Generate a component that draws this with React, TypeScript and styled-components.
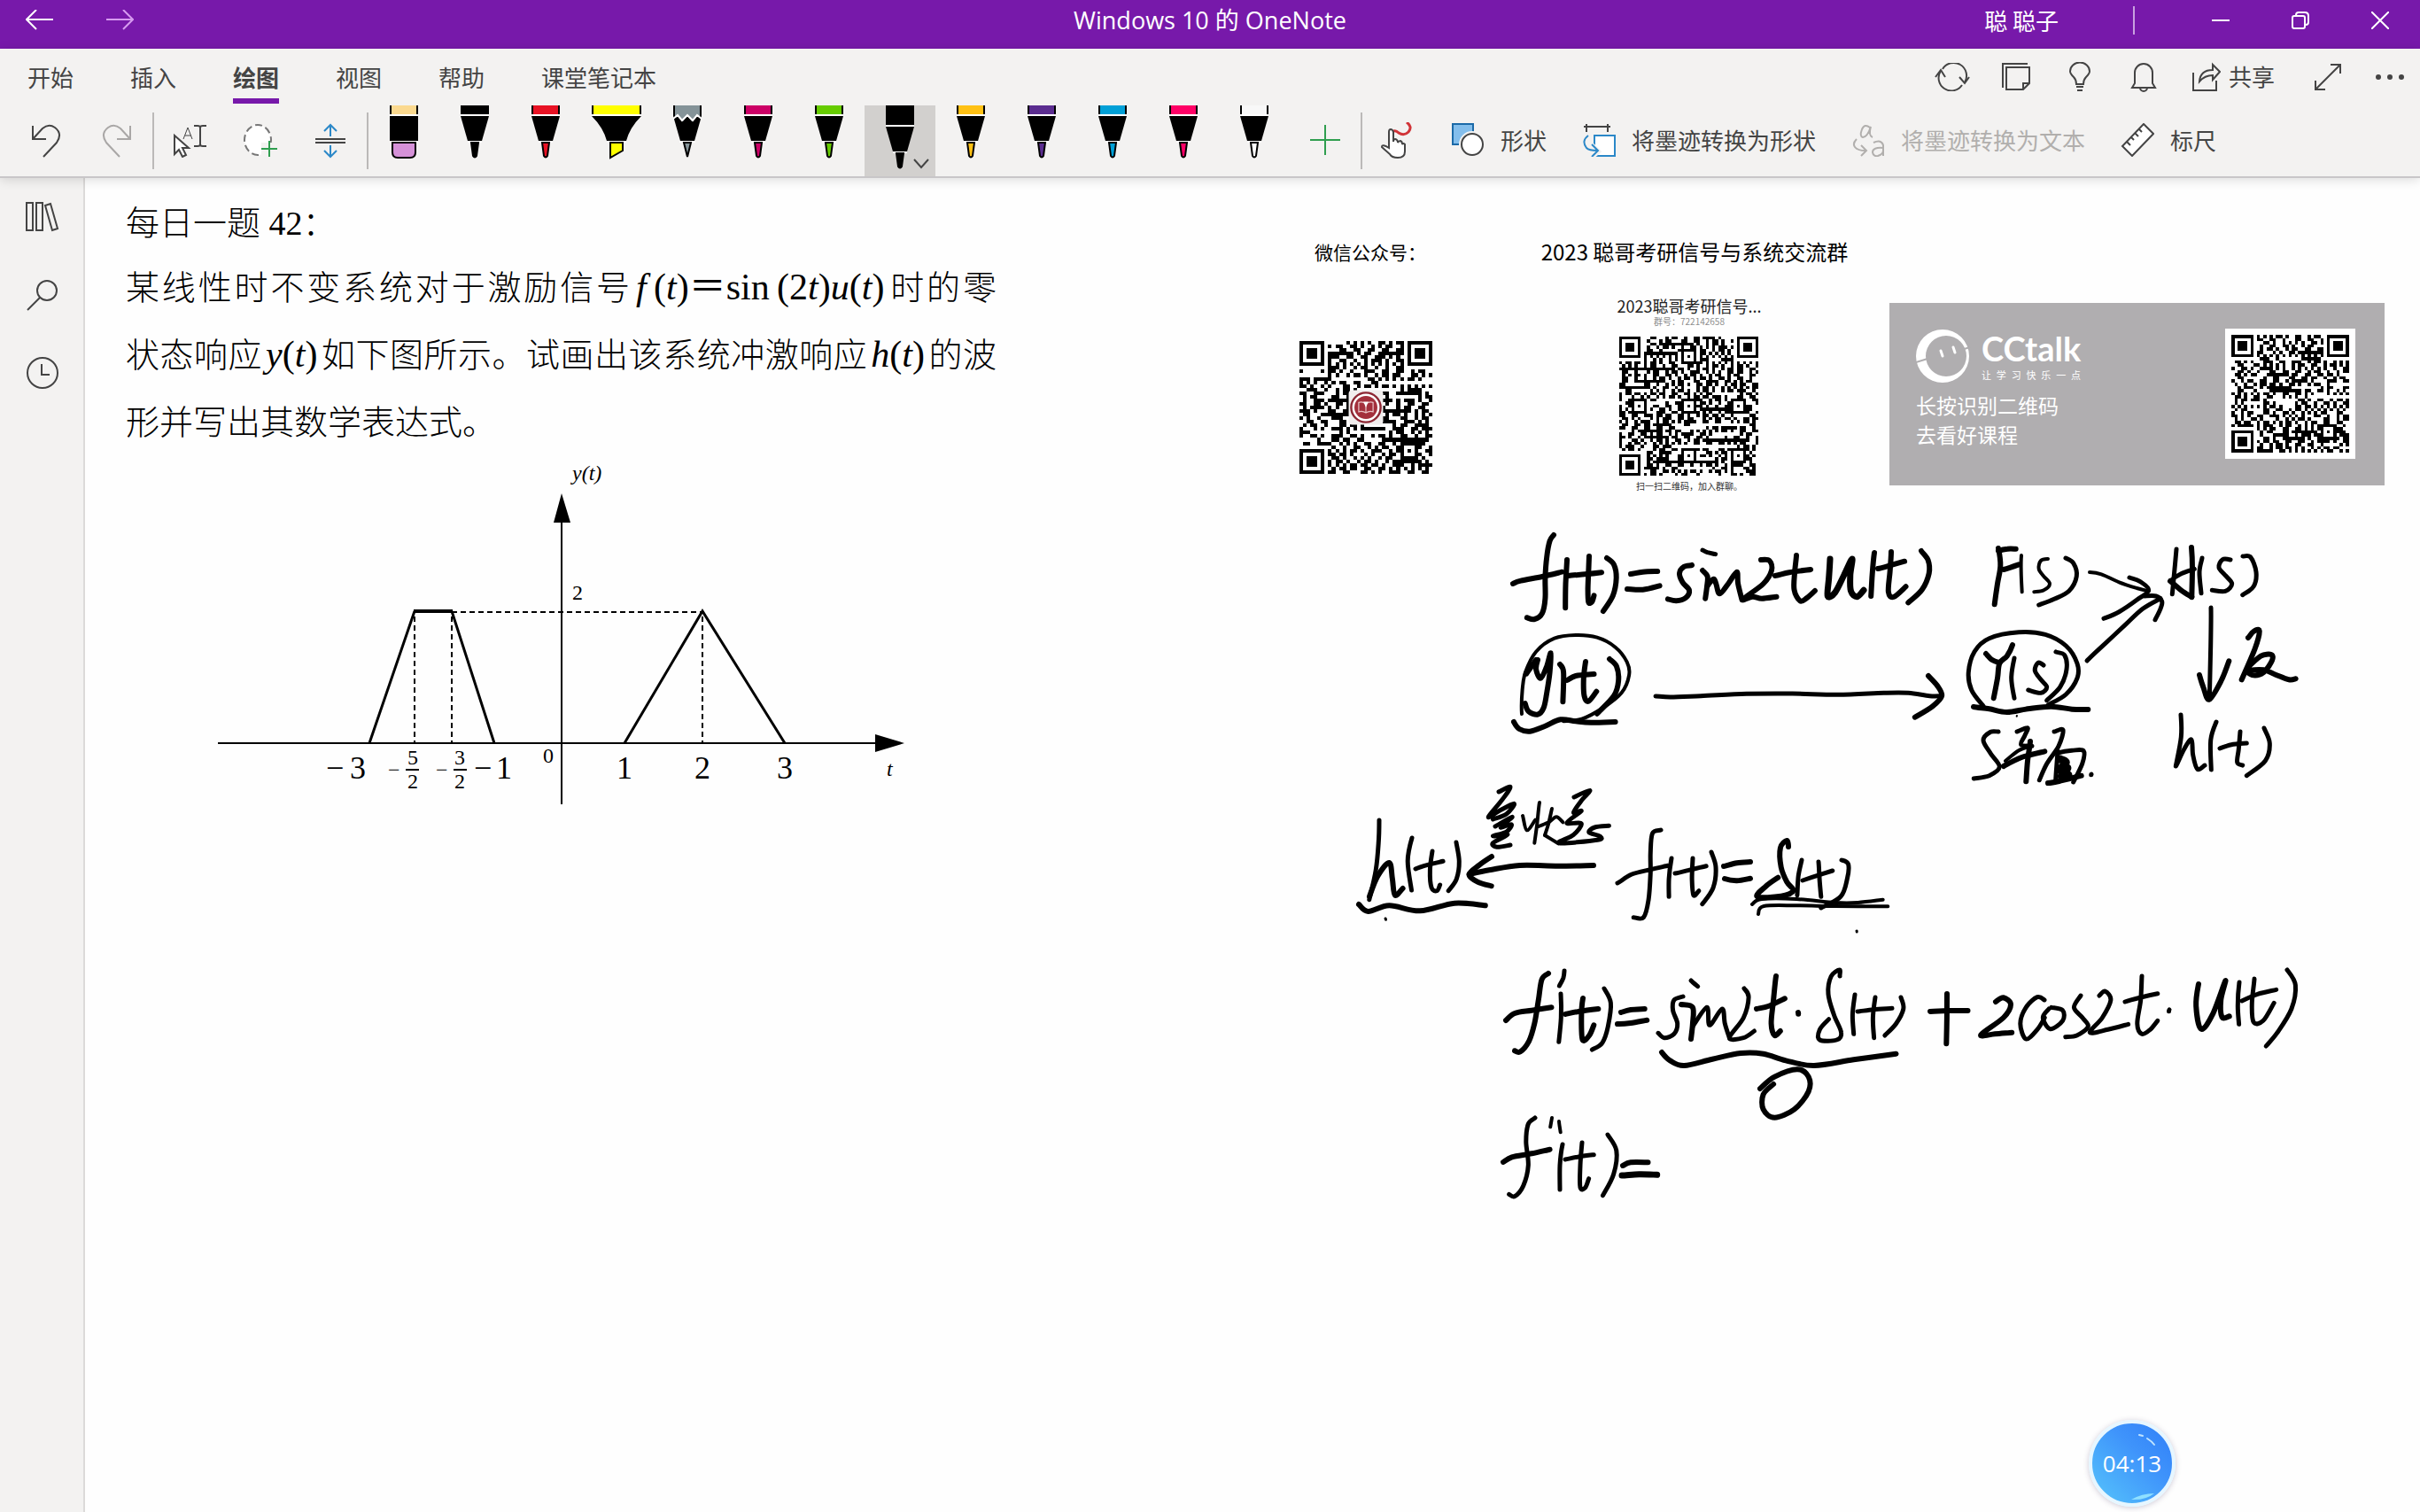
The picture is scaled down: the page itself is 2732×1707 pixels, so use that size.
import React from "react";
import styled, { createGlobalStyle } from "styled-components";

const ui = `"Noto Sans CJK SC", "Noto Sans", sans-serif`;
const serif = `"Liberation Serif", "Noto Sans CJK SC", serif`;
const ink = "#444444";

const GlobalStyle = createGlobalStyle`
  * { box-sizing: border-box; }
  html, body { margin: 0; padding: 0; }
  body { font-family: ${ui}; color: ${ink}; background: #ffffff; }
  button { font: inherit; color: inherit; background: none; border: 0; padding: 0; margin: 0; }
  svg { display: block; }
`;

const Shell = styled.div`
  min-height: 100vh;
  display: flex;
  flex-direction: column;
`;

/* ---------- title bar ---------- */

const TitleBar = styled.header`
  display: grid;
  grid-template-columns: 1fr auto 1fr;
  align-items: center;
  height: 55px;
  padding-bottom: 9px;
  background: #7719aa;
  color: #ffffff;
  font-size: 26px;
  line-height: 32px;
`;

const Title = styled.h1`
  margin: 0;
  font-family: "Open Sans", ${ui};
  font-size: 27px;
  font-weight: 400;
`;

const BarGroup = styled.div<{ $end?: boolean }>`
  display: flex;
  align-items: center;
  justify-content: ${(p) => (p.$end ? "flex-end" : "flex-start")};
`;

const BarButton = styled.button<{ $dim?: boolean }>`
  display: grid;
  place-items: center;
  width: 90px;
  height: 46px;
  color: ${(p) => (p.$dim ? "#d79bf0" : "#ffffff")};
`;

const Account = styled.button`
  color: #ffffff;
  padding: 0 84px 0 0;
`;

const BarDivider = styled.span`
  width: 2px;
  height: 32px;
  margin-right: 52px;
  background: #c9a0e0;
`;

/* ---------- ribbon ---------- */

const Ribbon = styled.div`
  position: relative;
  z-index: 1;
  background: #f3f2f1;
  border-bottom: 2px solid #c8c6c8;
  box-shadow: 0 2px 12px rgba(0, 0, 0, 0.14);
  font-size: 26px;
  line-height: 36px;
`;

const TabRow = styled.div`
  display: flex;
  justify-content: space-between;
  align-items: flex-start;
  height: 64px;
`;

const Tabs = styled.nav`
  display: flex;
  gap: 64px;
  padding-left: 31px;
`;

const Tab = styled.button<{ $active?: boolean }>`
  height: 62px;
  padding-top: 8px;
  border-bottom: 6px solid ${(p) => (p.$active ? "#7719aa" : "transparent")};
  font-weight: ${(p) => (p.$active ? 700 : 400)};
`;

const Actions = styled.div`
  display: flex;
`;

const ActionButton = styled.button`
  display: grid;
  place-items: center;
  width: 72px;
  height: 64px;
  &:last-child {
    width: 68px;
  }
`;

const ShareButton = styled.button`
  display: flex;
  align-items: center;
  gap: 9px;
  height: 64px;
  padding: 0 24px 2px 19px;
`;

const ToolRow = styled.div`
  display: flex;
  align-items: center;
  height: 80px;
  padding-left: 12px;
`;

const ToolButton = styled.button<{ $on?: boolean }>`
  display: grid;
  place-items: center;
  flex: none;
  width: 80px;
  height: 80px;
  background: ${(p) => (p.$on ? "#d2d0ce" : "none")};
`;

const LabelButton = styled.button<{ $off?: boolean }>`
  display: flex;
  align-items: center;
  flex: none;
  gap: 18px;
  height: 80px;
  padding: 0 20px 2px;
  color: ${(p) => (p.$off ? "#b1afad" : ink)};
`;

const Separator = styled.span`
  flex: none;
  width: 2px;
  height: 64px;
  background: #bbb9b8;
`;

/* ---------- workspace ---------- */

const Workspace = styled.div`
  display: flex;
  flex: 1;
`;

const Rail = styled.nav`
  flex: none;
  width: 96px;
  background: #f3f2f1;
  border-right: 2px solid #dcdad9;
`;

const RailButton = styled.button`
  display: grid;
  place-items: center;
  width: 96px;
  height: 88px;
`;

const Canvas = styled.main`
  position: relative;
  flex: 1;
  display: flex;
  background: #fefefe;
  color: #000000;
`;

const Problem = styled.section`
  flex: none;
  width: 1371px;
  padding: 16px 342px 0 46px;
`;

const Line = styled.p<{ $fill?: boolean; $first?: boolean }>`
  margin: 0;
  height: ${(p) => (p.$first ? 70 : 76)}px;
  line-height: ${(p) => (p.$first ? 70 : 76)}px;
  font-family: ${serif};
  font-size: 38px;
  font-weight: 300;
  white-space: nowrap;
  text-align-last: ${(p) => (p.$fill ? "justify" : "left")};
`;

const MathText = styled.span`
  display: inline-block;
  margin: 0 4px;
  font-weight: 400;
  font-size: 42px;
  line-height: 70px;
  text-align-last: left;
`;

const Graph = styled.svg`
  margin: 5px 0 0 88px;
  text {
    font-family: ${serif};
  }
`;

const Notes = styled.section`
  flex: 1;
`;

const Promos = styled.div`
  display: flex;
  align-items: flex-start;
  height: 378px;
`;

const Promo = styled.figure<{ $width: number }>`
  margin: 0;
  flex: none;
  width: ${(p) => p.$width}px;
  padding-top: 66px;
  display: flex;
  flex-direction: column;
  align-items: center;
  & + & {
    margin-left: 122px;
  }
`;

const PromoTitle = styled.figcaption<{ $size: number; $indent?: number }>`
  padding-left: ${(p) => p.$indent ?? 0}px;
  font-size: ${(p) => p.$size}px;
  line-height: 34px;
  font-weight: 400;
  white-space: nowrap;
`;

const WechatCode = styled.div`
  margin-top: 84px;
`;

const GroupCard = styled.div`
  display: flex;
  flex-direction: column;
  align-items: center;
  padding: 32px 12px 0 0;
`;

const GroupName = styled.span`
  font-size: 18px;
  line-height: 24px;
  color: #222222;
`;

const GroupNumber = styled.span`
  font-size: 10px;
  line-height: 12px;
  margin-bottom: 11px;
  color: #8f8f8f;
`;

const GroupHint = styled.span`
  font-size: 10px;
  line-height: 24px;
  color: #333333;
`;

const Banner = styled.aside`
  display: flex;
  justify-content: space-between;
  flex: none;
  width: 559px;
  height: 206px;
  margin: 141px 0 0 46px;
  padding: 29px 33px 0 30px;
  background: #b0aeb0;
  color: #ffffff;
`;

const BrandRow = styled.div`
  display: flex;
  gap: 12px;
  height: 66px;
`;

const BrandText = styled.div`
  width: 112px;
`;

const Brand = styled.div`
  font-family: Lato, sans-serif;
  font-size: 38px;
  font-weight: 700;
  line-height: 44px;
`;

const Slogan = styled.div`
  font-size: 11px;
  line-height: 16px;
  text-align-last: justify;
`;

const Invite = styled.p`
  margin: 4px 0 0;
  font-size: 23px;
  line-height: 33px;
`;

const CodeFrame = styled.div`
  width: 147px;
  height: 147px;
  padding: 7px;
  background: #ffffff;
`;

const Timer = styled.button`
  position: absolute;
  right: 276px;
  bottom: 6px;
  width: 98px;
  height: 98px;
  border: 4px solid #e6f6ff;
  border-radius: 50%;
  background: linear-gradient(45deg, #52bcfb 10%, #3f94fb 60%, #2f7ef8);
  box-shadow: 0 1px 6px rgba(60, 40, 90, 0.25);
  color: #ffffff;
  font-family: "Open Sans", sans-serif;
  font-size: 26px;
  line-height: 90px;
`;

const Gloss = styled.svg`
  position: absolute;
  inset: 0;
`;

/* ---------- QR codes ---------- */

function qrPath(n: number, seed: number, marks: number[][], hole: number) {
  let s = seed;
  const next = () => {
    s = (s * 1103515245 + 12345) & 0x7fffffff;
    return (s >> 12) & 1;
  };
  const ring = (dx: number, dy: number, r: number) => {
    const d = Math.max(Math.abs(dx), Math.abs(dy));
    return d === r || (r === 3 ? d <= 1 : d === 0);
  };
  let d = "";
  for (let y = 0; y < n; y++) {
    for (let x = 0; x < n; x++) {
      let on = next() === 1;
      if (x === 6 || y === 6) on = (x + y) % 2 === 0;
      for (const [cx, cy] of marks) {
        if (Math.abs(x - cx) <= 2 && Math.abs(y - cy) <= 2) on = ring(x - cx, y - cy, 2);
      }
      for (const [cx, cy] of [[3, 3], [n - 4, 3], [3, n - 4]]) {
        if (Math.abs(x - cx) <= 4 && Math.abs(y - cy) <= 4) on = ring(x - cx, y - cy, 3);
      }
      const c = (n - 1) / 2;
      if (hole && Math.abs(x - c) <= hole && Math.abs(y - c) <= hole) on = false;
      if (on) d += `M${x} ${y}h1v1h-1z`;
    }
  }
  return d;
}

type QrProps = { n: number; size: number; seed: number; marks: number[][]; label: string; seal?: boolean };

const Qr = ({ n, size, seed, marks, label, seal }: QrProps) => (
  <svg width={size} height={size} viewBox={`0 0 ${n} ${n}`} role="img" aria-label={label}>
    <path d={qrPath(n, seed, marks, seal ? 4 : 0)} fill="#000" shapeRendering="crispEdges" />
    {seal && (
      <g transform={`translate(${n / 2} ${n / 2})`}>
        <rect x="-4.8" y="-4.8" width="9.6" height="9.6" rx="1" fill="#f1eeee" />
        <circle r="4.1" fill="#fff" stroke="#8d2733" strokeWidth=".6" />
        <circle r="3.2" fill="#a3303c" />
        <path d="M-2 -1.4 Q-1 -1.8 0 -1 Q1 -1.8 2 -1.4 V1.2 Q1 .8 0 1.5 Q-1 .8 -2 1.2Z M0 -1V1.5" fill="none" stroke="#e9c4c6" strokeWidth=".3" />
        <path d="M-.7 -1.6 L0 0 L.7 -1.6Z" fill="#fff" />
      </g>
    )}
  </svg>
);

/* ---------- pens ---------- */

type Kind = "eraser" | "pen" | "marker" | "pencil";
const pens: { name: string; color: string; kind: Kind; on?: boolean }[] = [
  { name: "橡皮擦", color: "#fbd98f", kind: "eraser" },
  { name: "黑色笔", color: "#000000", kind: "pen" },
  { name: "红色笔", color: "#e81224", kind: "pen" },
  { name: "黄色荧光笔", color: "#ffff00", kind: "marker" },
  { name: "灰色铅笔", color: "#849398", kind: "pencil" },
  { name: "洋红色笔", color: "#cc0066", kind: "pen" },
  { name: "绿色笔", color: "#66cc00", kind: "pen" },
  { name: "黑色粗笔", color: "#000000", kind: "pen", on: true },
  { name: "橙色笔", color: "#ffc114", kind: "pen" },
  { name: "紫色笔", color: "#5b2d90", kind: "pen" },
  { name: "蓝色笔", color: "#00a0d7", kind: "pen" },
  { name: "粉色笔", color: "#ff0066", kind: "pen" },
  { name: "白色笔", color: "#ffffff", kind: "pen" },
];

const Pen = ({ color, kind, on }: { color: string; kind: Kind; on?: boolean }) => {
  if (kind === "eraser")
    return (
      <svg width="80" height="80">
        <rect x="24" width="32" height="60" fill="#000" />
        <rect x="26" width="28" height="10" fill={color} />
        <rect x="24" y="10" width="32" height="2" fill="#fff" />
        <rect x="24" y="40" width="32" height="2" fill="#fff" />
        <path d="M24 42h32v18H24z" fill="#f3f2f1" />
        <path d="M27 42h26v11q0 6-6 6H33q-6 0-6-6z" fill="#d591d8" stroke="#000" strokeWidth="2" />
      </svg>
    );
  if (kind === "marker")
    return (
      <svg width="80" height="80">
        <rect x="12" width="56" height="10" fill="#000" />
        <rect x="14" width="52" height="10" fill={color} />
        <rect x="12" y="10" width="56" height="2" fill="#fff" />
        <path d="M12 12h56Q55 25 51 40H29Q25 25 12 12z" fill="#000" />
        <rect x="29" y="40" width="22" height="2" fill="#fff" />
        <path d="M33 42h14v9L33 59z" fill={color} stroke="#000" strokeWidth="2" />
      </svg>
    );
  if (kind === "pencil")
    return (
      <svg width="80" height="80">
        <path d="M24 0h32v12L48 40H32L24 12z" fill="#000" />
        <path d="M26 0h28v13l-4-1-5 6-5-6-5 6-5-6-4 1z" fill={color} />
        <path d="M24 15l5-4 5 6 6-6 6 6 5-6 5 4" fill="none" stroke="#fff" strokeWidth="2" />
        <rect x="31" y="40" width="18" height="2" fill="#fff" />
        <path d="M36 42h8l-4 16z" fill={color} stroke="#000" strokeWidth="2" />
      </svg>
    );
  return (
    <svg width="80" height="80">
      <g transform={on ? "translate(0 12)" : undefined}>
        {on && <rect x="24" y="-12" width="32" height="13" fill="#000" />}
        <rect x="24" width="32" height="12" fill="#000" />
        <rect x="26" width="28" height="10" fill={color === "#ffffff" ? "#f8f8f8" : color} />
        <rect x="24" y="10" width="32" height="2" fill="#fff" />
        <path d="M24 12h32L48 40H32z" fill="#000" />
        <rect x="32" y="40" width="16" height="2" fill="#fff" />
        <path d="M36 42h8l-2 15q-2 3-4 0z" fill={color} stroke="#000" strokeWidth="2" />
      </g>
      {on && <path d="M56 61l8 9 8-9" fill="none" stroke={ink} strokeWidth="2" />}
    </svg>
  );
};

/* ---------- icons ---------- */

const Icon = ({ w, h, width = 2, children }: { w: number; h: number; width?: number; children: React.ReactNode }) => (
  <svg width={w} height={h} fill="none" stroke="currentColor" strokeWidth={width} aria-hidden="true">
    {children}
  </svg>
);

const BackIcon = () => (
  <Icon w={32} h={24}><path d="M31 11H1M12 0L1 11l11 11" /></Icon>
);
const ForwardIcon = () => (
  <Icon w={32} h={24}><path d="M1 11h30M20 0l11 11-11 11" /></Icon>
);

/* ---------- handwriting ---------- */

type Batch = { x: number; y: number; sx: number; sy: number; strokes: string[] };

/* A stroke is a list of "x,y" samples; "w8:" in front sets its pen width. */
const batches: Batch[] = [
  {
    x: 1680, y: 580, sx: 2.9037, sy: 3,
    strokes: [
      "218,75 205,95 195,150 190,220 190,290 180,340 155,360 130,355",
      "84,240 110,230 180,216 245,200",
      "262,158 257,240 256,322",
      "268,212 320,208 375,202",
      "334,148 332,200 330,260 332,302 343,302 350,280",
      "392,152 415,175 423,220 412,280 380,333",
      "470,208 510,200 558,198",
      "460,258 510,260 565,247",
      "672,178 645,182 630,205 640,235 662,262 650,288 620,298 592,292",
      "w5:706,126 722,134 748,140",
      "706,196 722,215 720,250 715,290",
      "722,245 742,224 750,240 762,274 790,240 818,200 822,240 835,295",
      "897,158 925,162 932,195 905,240 838,293 870,284 900,290 948,284",
      "945,214 990,202 1060,192",
      "1014,145 1008,200 1006,260 1025,298 1048,288 1074,264",
      "w7:1124,155 1120,220 1116,282 1140,270 1170,210 1196,156 1190,210 1192,265 1212,284 1234,262",
      "1268,136 1262,210 1258,282",
      "1280,190 1320,178 1368,164",
      "1325,132 1320,200 1315,268 1332,285 1372,250",
      "1422,130 1445,160 1448,205 1425,260 1380,304",
      "165,498 160,530 175,560 195,520 208,475 205,540 195,610 185,660 165,683 135,672 124,645",
      "w4:112,682 115,600 125,540 160,470 220,425 290,414 360,422 420,455 458,505 465,550 440,610 380,660 310,698 250,706",
      "160,498 128,545",
      "238,512 250,540 248,640",
      "262,568 290,552 350,546",
      "322,505 316,560 318,620 332,638 358,605",
      "400,495 424,520 430,570 415,620 360,680",
      "86,708 105,732 140,740 190,722 240,700 290,706 340,710 420,708",
      "w5:552,620 600,624 700,620 850,613 1000,612 1150,616 1300,610 1380,610 1450,620 1490,620",
      "1446,552 1475,585 1490,620 1460,655 1402,692",
    ],
  },
  {
    x: 2180, y: 580, sx: 3, sy: 3,
    strokes: [
      "232,120 238,180 228,240 218,310",
      "232,128 262,122 290,122",
      "250,192 300,175",
      "w4:308,145 308,200 311,268",
      "w4:400,155 375,162 368,190 385,215 405,240 385,262 352,268",
      "w5:458,152 485,170 496,215 470,265 420,292 368,312",
      "w4:540,200 580,208 640,235 700,255 740,265",
      "w5:676,220 710,232 740,262 700,295 640,335 588,358",
      "w5:530,500 590,445 660,380 720,325 780,290",
      "w5:725,282 765,282 785,300 780,325 762,362",
      "w5:834,122 828,190 820,275",
      "886,118 888,190 886,285",
      "w5:812,230 850,206 895,190",
      "812,230 850,262 886,285",
      "w5:922,152 912,200 918,272",
      "w5:1018,158 990,158 978,185 1000,212 1022,240 1000,265 955,262",
      "w5:1058,148 1085,150 1104,200 1095,250 1058,278",
      "w5:952,322 950,450 946,632",
      "912,550 925,590 945,632 985,570 1012,502",
      "1078,424 1095,402 1115,400 1100,460 1055,565",
      "1080,520 1120,485 1155,480 1158,500 1130,540 1095,550 1075,535 1130,532 1170,548 1215,565 1238,562",
      "190,478 210,498 235,508",
      "280,448 260,485 235,510 228,560 215,628",
      "w5:284,492 275,560 285,628",
      "w5:385,515 365,508 355,535 375,565 395,590 375,610 332,600",
      "w5:425,472 455,482 462,530 440,590 395,635",
      "w5:180,655 140,600 130,540 150,470 200,425 300,404 390,412 460,450 498,510 498,560 460,615 400,650",
      "148,658 200,664 260,675 330,664 410,656 480,665 535,666",
      "w2:293,687 293,689",
      "w5:232,742 205,742 180,770 205,815 235,860 200,890 148,900",
      "w5:295,742 330,728 320,755 308,785 345,790",
      "248,858 310,828 388,808",
      "340,775 330,840 325,910",
      "w4:255,840 300,805 340,790",
      "w5:420,742 450,735 435,790 395,850 370,905",
      "w5:432,808 428,860 425,905",
      "w5:432,812 480,805 520,806 515,850 485,912",
      "w9:440,835 460,845 440,870 465,865 445,892 468,888",
      "398,916 440,908 512,890",
      "w5:545,885 545,887",
      "w5:850,685 850,760 832,858",
      "w5:835,855 860,800 885,768 890,820 905,868 930,855",
      "w5:968,708 950,770 952,870",
      "w5:980,798 1020,785 1072,780",
      "w5:1050,742 1045,800 1040,845 1058,855",
      "w5:1130,728 1150,780 1135,840 1072,890",
    ],
  },
  {
    x: 1500, y: 870, sx: 2.3059, sy: 3,
    strokes: [
      "w5:134,172 132,250 125,340 108,440",
      "108,430 130,360 160,315 168,370 175,425 195,402",
      "80,455 105,480 160,460 240,478 330,452 410,460",
      "w3:151,504 151,508",
      "w5:218,230 208,310 218,408",
      "w5:228,335 260,322 300,310",
      "w5:272,275 266,340 270,400 284,410 292,390",
      "w5:334,245 342,310 335,370 314,410",
      "692,324 600,326 500,324 420,340 368,354",
      "426,294 395,322 368,354 390,380 426,394",
      "w5:445,76 475,58 455,100 418,160 445,140 485,115 465,150 430,168",
      "w5:436,192 480,160 450,195 478,185 465,210 430,225 468,220 430,248 440,262 475,255",
      "w4:508,155 518,205 540,170",
      "w4:550,110 545,180 538,248",
      "w4:583,132 575,180 565,222",
      "w4:548,192 575,178 595,160 612,178",
      "w4:565,222 600,250",
      "w5:642,92 682,70 660,105 640,145 660,140 622,180 660,182 640,220 602,248 702,238 708,225 680,212 695,195 732,190",
      "w5:866,205 845,215 840,280 840,350 835,440 822,500 796,500",
      "w5:755,385 790,355 840,338 885,325",
      "w5:894,300 888,370 888,430",
      "w5:905,352 940,340 985,326",
      "w5:950,300 948,370 952,425 966,410",
      "w5:998,278 1010,330 1003,400 975,455",
      "1030,328 1065,316 1100,312",
      "1032,370 1065,376 1100,368",
      "1200,262 1195,240 1178,265 1180,330 1195,380 1212,410 1180,428 1118,430 1140,395 1172,365",
      "w5:1234,305 1225,360 1222,425",
      "w5:1236,375 1275,358 1314,342",
      "w5:1278,312 1280,370 1284,430",
      "w5:1338,305 1355,320 1352,370 1335,430 1284,468",
      "w4:1105,455 1130,438 1220,438 1320,450 1380,450 1445,440",
      "w4:1120,488 1135,462 1220,460 1320,462 1458,463",
      "w3:1377,545 1377,549",
    ],
  },
  {
    x: 1660, y: 1070, sx: 1.568, sy: 3,
    strokes: [
      "140,90 128,110 122,180 115,260 105,320 90,355 80,352",
      "64,250 80,225 110,215 145,205",
      "w5:168,80 166,105 159,132",
      "w5:162,160 162,240 158,322",
      "170,228 195,218 228,210",
      "200,175 198,240 200,315 212,300 220,265",
      "w5:238,140 250,190 245,270 235,325 217,348",
      "268,222 285,213 310,210",
      "262,262 285,258 314,248",
      "w5:378,168 362,180 360,215 368,260 362,295 345,308 334,292",
      "375,195 395,205 395,260 392,312",
      "w5:392,115 404,134",
      "w5:395,270 420,205 425,265 447,210 452,260 460,308",
      "w5:486,140 494,170 485,240 460,308 485,308 504,285",
      "508,210 530,200 558,175",
      "542,98 538,180 534,260 540,300 550,285",
      "582,223 582,227",
      "w5:655,100 655,78 640,100 635,160 645,230 658,290 650,315 620,315 620,280 636,245",
      "w5:682,162 678,230 680,295",
      "w5:686,220 715,212 748,208",
      "w5:718,170 714,240 716,308",
      "w5:764,172 768,210 755,260 735,300",
      "815,218 850,216 882,216",
      "845,158 845,240 844,328",
      "932,185 945,172 958,195 945,240 905,298 930,295 960,290",
      "w5:1018,180 1005,170 985,205 975,260 985,312 1005,280 1018,240",
      "w5:1025,210 1015,240 1028,278 1050,250 1050,215 1030,205",
      "w5:1082,165 1070,205 1085,240 1095,270 1075,300 1055,305",
      "w5:1115,165 1125,150 1135,180 1120,240 1098,290 1130,280 1166,262",
      "w5:1160,185 1190,170 1218,158",
      "w5:1190,98 1188,180 1182,260 1190,295 1205,280 1218,250",
      "w5:1238,214 1238,218",
      "1290,125 1286,200 1295,278 1315,230 1338,115 1330,180 1332,238 1345,235",
      "w5:1362,120 1360,200 1362,262",
      "w5:1368,182 1395,160 1428,145",
      "w5:1390,108 1385,190 1388,255 1405,250 1424,190",
      "w5:1448,78 1462,130 1455,210 1430,290 1410,336",
      "340,358 355,385 380,402 430,380 480,360 520,362 560,385 610,402 680,382 755,362",
      "514,480 540,440 580,415 600,440 600,490 575,550 540,578 520,550 520,500 538,465",
      "w5:116,580 104,600 100,660 104,740 95,810 80,845 70,838",
      "60,730 75,712 110,700 142,686",
      "w4:146,578 143,610",
      "w4:158,592 161,628",
      "w5:164,668 160,740 160,822",
      "w5:170,720 195,710 220,704",
      "w5:199,664 196,740 196,815 205,815 211,785",
      "w5:244,635 260,690 255,770 236,842",
      "272,740 285,730 316,730",
      "w7:270,775 300,770 332,772",
    ],
  },
];

function smooth(points: number[][]) {
  const at = (i: number) => points[Math.max(0, Math.min(points.length - 1, i))];
  let d = `M${points[0].map(Math.round).join(" ")}`;
  for (let i = 0; i < points.length - 1; i++) {
    const [a, b, c, e] = [at(i - 1), at(i), at(i + 1), at(i + 2)];
    const c1 = [b[0] + (c[0] - a[0]) / 6, b[1] + (c[1] - a[1]) / 6];
    const c2 = [c[0] - (e[0] - b[0]) / 6, c[1] - (e[1] - b[1]) / 6];
    d += `C${[...c1, ...c2, ...c].map((v) => v.toFixed(1)).join(" ")}`;
  }
  return d;
}

const inkStrokes = batches.flatMap((b) =>
  b.strokes.map((raw) => {
    const [, w, body] = raw.match(/^(?:w(\d+):)?(.*)$/) as RegExpMatchArray;
    const points = body.split(" ").map((p) => {
      const [x, y] = p.split(",").map(Number);
      return [b.x + x / b.sx, b.y + y / b.sy];
    });
    return { d: smooth(points), width: w ? Number(w) : 6 };
  })
);

const InkLayer = styled.svg`
  margin-left: 32px;
  fill: none;
  stroke: #000000;
  stroke-linecap: round;
  stroke-linejoin: round;
`;

/* ---------- page ---------- */

const App = () => (
  <Shell>
    <GlobalStyle />
    <TitleBar>
      <BarGroup>
        <BarButton aria-label="后退"><BackIcon /></BarButton>
        <BarButton aria-label="前进" $dim><ForwardIcon /></BarButton>
      </BarGroup>
      <Title>Windows 10 的 OneNote</Title>
      <BarGroup $end>
        <Account>聪 聪子</Account>
        <BarDivider />
        <BarButton aria-label="最小化"><Icon w={20} h={20}><path d="M0 10h20" /></Icon></BarButton>
        <BarButton aria-label="还原">
          <Icon w={20} h={20}><rect x="1" y="5" width="14" height="14" rx="2" /><path d="M5 5V4q0-3 3-3h7q4 0 4 4v7q0 3-3 3h-1" /></Icon>
        </BarButton>
        <BarButton aria-label="关闭"><Icon w={20} h={20}><path d="M0 0l20 20M20 0L0 20" /></Icon></BarButton>
      </BarGroup>
    </TitleBar>

    <Ribbon>
      <TabRow>
        <Tabs>
          {["开始", "插入", "绘图", "视图", "帮助", "课堂笔记本"].map((t) => (
            <Tab key={t} $active={t === "绘图"}>{t}</Tab>
          ))}
        </Tabs>
        <Actions>
          <ActionButton aria-label="同步">
            <Icon w={40} h={32}>
              <path d="M31 25A14 14 0 0 1 7 9M9 7A14 14 0 0 1 34 22" />
              <path d="M28 16l6 7 5-7M1 16l6-8 5 8" />
            </Icon>
          </ActionButton>
          <ActionButton aria-label="便笺">
            <Icon w={32} h={32}><path d="M1 28V1h28M5 5h26v18l-7 7H5zM31 23h-7v7" /></Icon>
          </ActionButton>
          <ActionButton aria-label="操作说明">
            <Icon w={24} h={34}><path d="M8 25q0-5-3-8Q1 13 1 10.500A11 10 0 0 1 23 10.500Q23 13 19 17q-3 3-3 8zM8 28h8M9 32h6" /></Icon>
          </ActionButton>
          <ActionButton aria-label="通知">
            <Icon w={30} h={34}><path d="M2 29l3-5v-12a10 10 0 0 1 20 0v12l3 5zM11 29a4 4 0 0 0 8 0" /></Icon>
          </ActionButton>
          <ShareButton>
            <Icon w={32} h={34}><path d="M1 13v20h26V22M8 23q1-13 15-13V4l8 8-8 9v-5q-9 0-15 7z" /></Icon>
            共享
          </ShareButton>
          <ActionButton aria-label="全屏">
            <Icon w={32} h={32}><path d="M2 30L30 2M19 2h11v10M2 20v10h11" /></Icon>
          </ActionButton>
          <ActionButton aria-label="更多">
            <svg width="32" height="8" fill={ink}><circle cx="3" cy="4" r="3" /><circle cx="16" cy="4" r="3" /><circle cx="29" cy="4" r="3" /></svg>
          </ActionButton>
        </Actions>
      </TabRow>
      <ToolRow>
        <ToolButton aria-label="撤消"><Icon w={34} h={38}><path d="M2 2v15h15M2 17L13 5Q20-1 27 4Q36 11 29 21L14 37" /></Icon></ToolButton>
        <ToolButton aria-label="恢复"><svg width="34" height="38" fill="none" stroke="#a9a7a6" strokeWidth="2"><path d="M32 2v15H17M32 17L21 5Q14-1 7 4Q-2 11 5 21L20 37" /></svg></ToolButton>
        <Separator />
        <ToolButton aria-label="选择对象或键入文本">
          <svg width="38" height="38" fill="none" stroke={ink} strokeWidth="2">
            <path d="M2 13v21l5-5 4 8 4-2-4-8h7z" fill="#fff" />
            <path d="M24 2h4q3 0 3 2 0-2 3-2h4M31 4v20M24 25h4q3 0 3-2 0 2 3 2h4" />
            <path d="M12 17l5-13 5 13M14 13h7" strokeWidth="1" />
          </svg>
        </ToolButton>
        <ToolButton aria-label="套索选择">
          <svg width="42" height="40" fill="none" strokeWidth="2">
            <ellipse cx="18" cy="19" rx="15" ry="17" fill="#fff" stroke="#777" strokeDasharray="8 4" />
            <rect x="22" y="22" width="20" height="18" fill="#f3f2f1" /><path d="M31 20v18M22 29h18" stroke="#2f9e4f" />
          </svg>
        </ToolButton>
        <ToolButton aria-label="插入空间">
          <svg width="36" height="40" fill="none" stroke="#2b88c8" strokeWidth="2">
            <path d="M17 15V2M10 9l7-7 7 7M17 25v13M10 31l7 7 7-7" /><path d="M0 18h34M0 22h34" stroke={ink} />
          </svg>
        </ToolButton>
        <Separator />
        {pens.map((p) => (
          <ToolButton key={p.name} aria-label={p.name} $on={p.on}>
            <Pen color={p.color} kind={p.kind} on={p.on} />
          </ToolButton>
        ))}
        <ToolButton aria-label="添加笔"><svg width="34" height="36" stroke="#2f9e4f" strokeWidth="2"><path d="M17 0v34M0 17h34" /></svg></ToolButton>
        <Separator />
        <ToolButton aria-label="用手指绘图">
          <svg width="38" height="42" fill="none" stroke={ink} strokeWidth="2">
            <path d="M11 13q4-6 9-1 6 4 11-1 5-6-2-11" stroke="#d13438" strokeWidth="3" />
            <path d="M9 27V11q0-3 2-3t3 3v11q0-3 2-3t3 3v1q1-2 3-2 2 1 2 3v1q1-2 3 0v8q0 7-8 7-7 0-9-4L1 28q0-4 8 1z" fill="#fff" />
          </svg>
        </ToolButton>
        <LabelButton>
          <svg width="38" height="38"><rect x="2" y="1" width="23" height="23" fill="#83beec" stroke="#1b6aa8" strokeWidth="2" /><circle cx="24" cy="24" r="15" fill="#f3f2f1" /><circle cx="24" cy="24" r="12" fill="#fff" stroke={ink} strokeWidth="2" /></svg>
          形状
        </LabelButton>
        <LabelButton>
          <svg width="38" height="38" fill="none" stroke={ink} strokeWidth="2">
            <path d="M5 1v9M29 1v9M2 4h30" /><rect x="14" y="14" width="23" height="23" fill="#fff" stroke="#2b88c8" />
            <path d="M7 14Q-2 22 6 30L14 32M10 24l8 8-7 6" stroke="#f3f2f1" strokeWidth="6" />
            <path d="M7 14Q-1 20 5 28Q8 31 17 31M11 24l7 7-7 7" stroke="#2b88c8" />
          </svg>
          将墨迹转换为形状
        </LabelButton>
        <LabelButton $off disabled>
          <svg width="38" height="38" fill="none" stroke="#b1afad" strokeWidth="2">
            <path d="M21 5q-6-5-9 2-3 8 1 9 5 0 9-12-3 10 2 12" /><path d="M6 18q-5 5-2 9 3 4 12 4M11 25l6 6-6 6" />
            <path d="M25 22q9-4 11 3v12M36 28q-12-1-12 5 1 5 6 4 6-2 6-6" />
          </svg>
          将墨迹转换为文本
        </LabelButton>
        <LabelButton>
          <svg width="38" height="38" fill="none" stroke={ink} strokeWidth="2"><path d="M26 1l11 11-24 25L2 26zM7 21l4 4M12 16l3 3M16 11l4 4M21 7l3 3" fill="#fff" /></svg>
          标尺
        </LabelButton>
      </ToolRow>
    </Ribbon>

    <Workspace>
      <Rail>
        <RailButton aria-label="笔记本"><Icon w={38} h={34}><path d="M1 1h7v31H1zM12 1h7v31h-7zM22 4l6-2 8 28-6 2z" /></Icon></RailButton>
        <RailButton aria-label="搜索"><Icon w={36} h={36}><circle cx="23" cy="13" r="11" /><path d="M15 21L1 35" /></Icon></RailButton>
        <RailButton aria-label="最近的笔记"><Icon w={38} h={38}><circle cx="19" cy="19" r="17" /><path d="M18 9v12h9" /></Icon></RailButton>
      </Rail>
      <Canvas>
        <Problem>
          <Line $first>每日一题 42：</Line>
          <Line $fill>某线性时不变系统对于激励信号<MathText><i>f</i>&#8201;(<i>t</i>)＝sin&#8201;(2<i>t</i>)<i>u</i>(<i>t</i>)</MathText>时的零</Line>
          <Line $fill>状态响应<MathText><i>y</i>(<i>t</i>)</MathText>如下图所示。试画出该系统冲激响应<MathText><i>h</i>(<i>t</i>)</MathText>的波</Line>
          <Line>形并写出其数学表达式。</Line>
          <Graph width="810" height="400" viewBox="230 520 810 400" role="img" aria-label="y(t) 的波形">
            <g stroke="#000" fill="none">
              <path d="M246 839H990M634 588V908" strokeWidth="2" />
              <path d="M417 839L468 690M510 690L558 839M705 839L793 690L886 839" strokeWidth="3" />
              <path d="M467 690H511" strokeWidth="4" />
              <path d="M510 691H793M468 696V838M510 696V838M793 696V838" strokeWidth="2" strokeDasharray="6 4" />
              <path d="M458 869H473M512 869H527" strokeWidth="2" />
            </g>
            <path d="M634 557l10 33h-19zM1021 839l-33-10v20z" />
            <g fontSize="24">
              <text x="646" y="542" fontStyle="italic">y(t)</text>
              <text x="646" y="677">2</text>
              <text x="613" y="861">0</text>
              <text x="1001" y="876" fontStyle="italic">t</text>
              <text x="460" y="863">5</text>
              <text x="460" y="890">2</text>
              <text x="513" y="863">3</text>
              <text x="513" y="890">2</text>
              <text x="438" y="877">−</text>
              <text x="492" y="877">−</text>
            </g>
            <g fontSize="36">
              <text x="368" y="879">−</text>
              <text x="395" y="879">3</text>
              <text x="535" y="879">−</text>
              <text x="560" y="879">1</text>
              <text x="696" y="879">1</text>
              <text x="784" y="879">2</text>
              <text x="877" y="879">3</text>
            </g>
          </Graph>
        </Problem>
        <Notes>
          <Promos>
            <Promo $width={150}>
              <PromoTitle $size={21} $indent={10}>微信公众号：</PromoTitle>
              <WechatCode><Qr n={37} size={150} seed={4217} marks={[[30, 30]]} label="微信公众号二维码" seal /></WechatCode>
            </Promo>
            <Promo $width={348}>
              <PromoTitle $size={24}>2023 聪哥考研信号与系统交流群</PromoTitle>
              <GroupCard>
                <GroupName>2023聪哥考研信号...</GroupName>
                <GroupNumber>群号：722142658</GroupNumber>
                <Qr n={45} size={157} seed={90125} marks={[[22, 6], [6, 22], [22, 22], [38, 22], [22, 38], [38, 38]]} label="交流群二维码" />
                <GroupHint>扫一扫二维码，加入群聊。</GroupHint>
              </GroupCard>
            </Promo>
            <Banner>
              <div>
                <BrandRow>
                  <svg width="62" height="62" aria-hidden="true">
                    <path fill="#fff" fillRule="evenodd" d="M0 31a30 30 0 1 1 60 0a30 30 0 1 1-60 0zM11 31a23 23 0 1 0 46 0a23 23 0 1 0-46 0z" />
                    <path d="M0 38l13-4M51 24l10-3" stroke="#b0aeb0" strokeWidth="2" />
                    <path d="M28 25l2 6M42 21l2 6" stroke="#fff" strokeWidth="3" strokeLinecap="round" />
                  </svg>
                  <BrandText>
                    <Brand>CCtalk</Brand>
                    <Slogan>让学习快乐一点</Slogan>
                  </BrandText>
                </BrandRow>
                <Invite>长按识别二维码<br />去看好课程</Invite>
              </div>
              <CodeFrame><Qr n={37} size={133} seed={777} marks={[[30, 30]]} label="课程二维码" /></CodeFrame>
            </Banner>
          </Promos>
          <InkLayer width="1180" height="830" viewBox="1500 580 1180 830" role="img" aria-label="手写推导">
            {inkStrokes.map((s, i) => <path key={i} d={s.d} strokeWidth={s.width} />)}
          </InkLayer>
        </Notes>
        <Timer>
          <Gloss width="90" height="90" fill="none" stroke="#bfe4ff" strokeLinecap="round" aria-hidden="true">
            <path d="M53 13l4 1M62 17q5 3 8 7" strokeWidth="2" />
            <path d="M44 86q12-7 26-7q-10 8-26 7z" fill="#8fe0ff" stroke="none" />
          </Gloss>
          04:13
        </Timer>
      </Canvas>
    </Workspace>
  </Shell>
);

export default App;
